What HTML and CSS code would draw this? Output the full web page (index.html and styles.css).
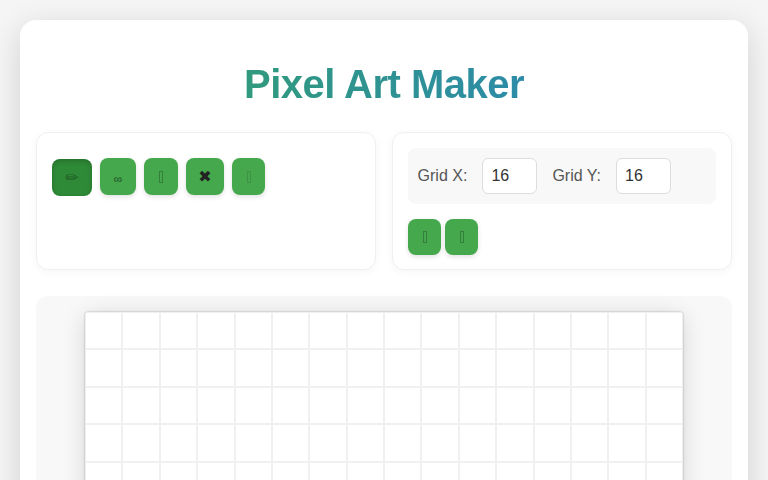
FILE: index.html
```
<!DOCTYPE html>
<html lang="en">
<head>
<meta charset="utf-8">
<title>Pixel Art Maker</title>
<link rel="stylesheet" href="styles.css">
</head>
<body>
<main class="app">
  <h1 class="title">Pixel Art Maker</h1>
  <section class="toolbar">
    <div class="panel">
      <div class="tools tools-main">
        <button class="btn btn-pencil active">✏︎</button>
        <button class="btn btn-eraser">∞</button>
        <button class="btn btn-fill" aria-label="Fill"><span class="tofu"></span></button>
        <button class="btn btn-clear">✖︎</button>
        <button class="btn btn-narrow" aria-label="Picker"><span class="tofu tofu-dim"></span></button>
      </div>
    </div>
    <div class="panel">
      <div class="grid-size">
        <label class="size-label" for="gx">Grid X:</label>
        <input class="size-input" id="gx" type="number" value="16">
        <label class="size-label" for="gy">Grid Y:</label>
        <input class="size-input" id="gy" type="number" value="16">
      </div>
      <div class="tools tools-file">
        <button class="btn btn-narrow btn-file" aria-label="Save"><span class="tofu"></span></button>
        <button class="btn btn-narrow btn-file" aria-label="Load"><span class="tofu"></span></button>
      </div>
    </div>
  </section>
  <section class="canvas-wrap">
    <div class="canvas" id="canvas"></div>
  </section>
</main>
<script src="script.js"></script>
</body>
</html>
```
FILE: styles.css
```
* { box-sizing: border-box; }
html, body { height: 100%; }
body {
  margin: 0;
  padding: 20px;
  background: #f5f5f5;
  font-family: "Liberation Sans", Arial, sans-serif;
  overflow: hidden;
}
.app {
  background: #fff;
  border-radius: 16px;
  padding: 16px;
  box-shadow: 0 8px 32px rgba(0,0,0,.15);
}
.title {
  margin: 24px 0;
  font-size: 40px;
  line-height: 48px;
  font-weight: 700;
  letter-spacing: -.5px;
  text-align: center;
  background: linear-gradient(90deg, #33a55d, #2a80c8);
  -webkit-background-clip: text;
  background-clip: text;
  color: transparent;
}
.toolbar {
  display: grid;
  grid-template-columns: 1fr 1fr;
  gap: 16px;
  margin-bottom: 26px;
}
.panel {
  padding: 15px;
  background: #fff;
  border: 1px solid #f0f0f0;
  border-radius: 12px;
  box-shadow: 0 2px 8px rgba(0,0,0,.04);
  height: 138px;
}
.tools { display: flex; align-items: flex-start; }
.tools-main { gap: 8px; padding-top: 10px; }
.tools-file { gap: 4px; }
.btn {
  display: flex;
  align-items: center;
  justify-content: center;
  height: 37px;
  padding: 0;
  border: 0;
  border-radius: 8px;
  background: #45a84c;
  color: #222;
  font-size: 16px;
  font-family: "Liberation Sans", "DejaVu Sans", Arial, sans-serif;
  box-shadow: 0 2px 5px rgba(0,0,0,.12);
}
.btn-pencil { width: 40px; }
.btn-eraser { width: 36px; font-size: 12px; padding-top: 5px; color: #23512a; }
.btn-fill { width: 34px; }
.btn-clear { width: 38px; }
.btn-narrow { width: 33px; }
.btn-file { height: 36px; }
.tofu {
  display: block;
  width: 4px;
  height: 12px;
  border: 1px solid #357f3c;
}
.tofu-dim { border-color: #3d9246; }
.btn.active {
  background: #2e8a36;
  color: #1f5e25;
  box-shadow: inset 0 2px 5px rgba(0,0,0,.2);
  transform: translateY(1px);
}
.grid-size {
  display: flex;
  align-items: center;
  gap: 15px;
  padding: 10px 9.6px;
  margin-bottom: 15px;
  background: #f8f8f8;
  border-radius: 8px;
}
.size-label { font-size: 16px; color: #555; }
.size-input {
  width: 55px;
  height: 36px;
  padding: 0 8px;
  border: 1px solid #ddd;
  border-radius: 6px;
  background: #fff;
  color: #333;
  font-size: 16px;
  font-family: "Liberation Sans", Arial, sans-serif;
}
.canvas-wrap {
  display: flex;
  justify-content: center;
  padding: 16px;
  background: #f8f8f8;
  border-radius: 12px;
}
.canvas {
  width: 598px;
  display: grid;
  grid-template-columns: repeat(16, 1fr);
  border-radius: 4px;
  background: #fff;
  overflow: hidden;
  box-shadow: 0 0 2px rgba(0,0,0,.35), 0 4px 24px rgba(0,0,0,.14);
  flex: none;
}
.cell { aspect-ratio: 1; border: 1px solid #f0f0f0; }
```
FILE: script.js
```
var canvas = document.getElementById('canvas');
for (var i = 0; i < 256; i++) {
  var cell = document.createElement('div');
  cell.className = 'cell';
  canvas.appendChild(cell);
}
```
